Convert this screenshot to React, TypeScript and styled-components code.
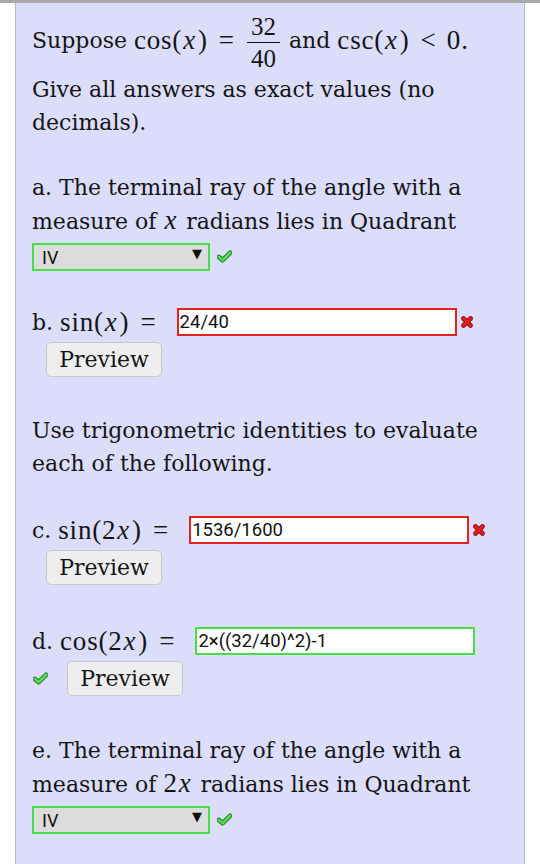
import React from "react";
import styled, { createGlobalStyle } from "styled-components";

const GlobalStyle = createGlobalStyle`
  html, body {
    margin: 0;
    padding: 0;
    background: #ffffff;
  }
  body {
    font-family: "DejaVu Serif", "Liberation Serif", serif;
    color: #151515;
  }
`;

type Mark = "correct" | "incorrect";

const CheckIcon = () => (
  <svg width="15" height="13" viewBox="0 0 16 14">
    <path
      d="M2 7.5 L6 11 L14 3"
      fill="none"
      stroke="#2a6e2a"
      strokeWidth="5"
      strokeLinecap="round"
      strokeLinejoin="round"
    />
    <path
      d="M2 7.5 L6 11 L14 3"
      fill="none"
      stroke="#4fe04f"
      strokeWidth="3"
      strokeLinecap="round"
      strokeLinejoin="round"
    />
  </svg>
);

const CrossIcon = () => (
  <svg width="12" height="12" viewBox="0 0 12 12">
    <path
      d="M2.5 2.5 L9.5 9.5 M9.5 2.5 L2.5 9.5"
      fill="none"
      stroke="#8a1010"
      strokeWidth="4.6"
      strokeLinecap="round"
    />
    <path
      d="M2.5 2.5 L9.5 9.5 M9.5 2.5 L2.5 9.5"
      fill="none"
      stroke="#e41c1c"
      strokeWidth="3"
      strokeLinecap="round"
    />
  </svg>
);

const MarkIcon = ({ mark }: { mark: Mark }) => (
  <MarkSlot>{mark === "correct" ? <CheckIcon /> : <CrossIcon />}</MarkSlot>
);

const QuadrantSelect = () => (
  <SelectRow>
    <SelectWrap>
      <Select defaultValue="IV">
        <option value="I">I</option>
        <option value="II">II</option>
        <option value="III">III</option>
        <option value="IV">IV</option>
      </Select>
      <Arrow>▼</Arrow>
    </SelectWrap>
    <MarkIcon mark="correct" />
  </SelectRow>
);

const Page = () => (
  <>
    <GlobalStyle />
    <Screen>
      <Panel>
        <FirstLine>
          Suppose&nbsp;
          <MathSpan>
            cos(<Var>x</Var>)
          </MathSpan>
          <MathOp>=</MathOp>
          <Fraction>
            <Numerator>32</Numerator>
            <Denominator>40</Denominator>
          </Fraction>
          &nbsp;and&nbsp;
          <MathSpan>
            csc(<Var>x</Var>)
          </MathSpan>
          <MathOp>&lt;</MathOp>
          <MathSpan>0.</MathSpan>
        </FirstLine>
        <Paragraph>Give all answers as exact values (no decimals).</Paragraph>

        <Paragraph $top={32}>
          a. The terminal ray of the angle with a measure of{" "}
          <MathSpan>
            <Var>x</Var>
          </MathSpan>{" "}
          radians lies in Quadrant
        </Paragraph>
        <QuadrantSelect />

        <AnswerRow $top={38}>
          <Label>
            b.&nbsp;
            <MathSpan>
              sin(<Var>x</Var>)
            </MathSpan>
            <MathOp>=</MathOp>
          </Label>
          <AnswerInput readOnly value="24/40" $mark="incorrect" />
          <MarkIcon mark="incorrect" />
        </AnswerRow>
        <PreviewRow>
          <PreviewButton>Preview</PreviewButton>
        </PreviewRow>

        <Paragraph $top={37}>
          Use trigonometric identities to evaluate each of the following.
        </Paragraph>

        <AnswerRow $top={36}>
          <Label>
            c.&nbsp;
            <MathSpan>
              sin(2<Var>x</Var>)
            </MathSpan>
            <MathOp>=</MathOp>
          </Label>
          <AnswerInput readOnly value="1536/1600" $mark="incorrect" />
          <MarkIcon mark="incorrect" />
        </AnswerRow>
        <PreviewRow>
          <PreviewButton>Preview</PreviewButton>
        </PreviewRow>

        <AnswerRow $top={42}>
          <Label>
            d.&nbsp;
            <MathSpan>
              cos(2<Var>x</Var>)
            </MathSpan>
            <MathOp>=</MathOp>
          </Label>
          <AnswerInput readOnly value="2×((32/40)^2)-1" $mark="correct" />
        </AnswerRow>
        <PreviewRow>
          <MarkIcon mark="correct" />
          <PreviewButton $shift>Preview</PreviewButton>
        </PreviewRow>

        <Paragraph $top={38}>
          e. The terminal ray of the angle with a measure of{" "}
          <MathSpan>
            2<Var>x</Var>
          </MathSpan>{" "}
          radians lies in Quadrant
        </Paragraph>
        <QuadrantSelect />
      </Panel>
    </Screen>
  </>
);

export default function App() {
  return <Page />;
}

const Screen = styled.div`
  width: 540px;
  min-height: 864px;
  box-sizing: border-box;
  border-top: 3px solid #a9a9a9;
  padding-left: 15px;
  display: flex;
`;

const Panel = styled.div`
  width: 510px;
  min-height: 861px;
  box-sizing: border-box;
  background: #dcdcfb;
  border-left: 1px solid #b6b6d2;
  border-right: 1px solid #b6b6d2;
  padding: 4px 16px 40px 16px;
  font-size: 22px;
  line-height: 33px;
`;

const FirstLine = styled.div`
  display: flex;
  align-items: center;
  height: 66px;
  white-space: nowrap;
`;

const Paragraph = styled.p<{ $top?: number }>`
  margin: ${(p) => p.$top ?? 0}px 0 0 0;
`;

const MathSpan = styled.span`
  font-family: "Liberation Serif", "DejaVu Serif", serif;
  font-size: 27px;
  letter-spacing: 0.8px;
`;

const Var = styled.i`
  font-style: italic;
  margin: 0 2px 0 1px;
`;

const MathOp = styled.span`
  font-family: "Liberation Serif", serif;
  font-size: 27px;
  padding: 0 11px;
`;

const Fraction = styled.span`
  display: inline-flex;
  flex-direction: column;
  align-items: center;
  font-family: "Liberation Serif", serif;
  font-size: 25px;
  line-height: 25px;
  padding: 0 2px;
  margin-top: 4px;
`;

const Numerator = styled.span`
  padding: 0 4px 3px;
  border-bottom: 1.5px solid #151515;
`;

const Denominator = styled.span`
  padding: 3px 4px 0;
`;

const SelectRow = styled.div`
  display: flex;
  align-items: center;
  gap: 6px;
  margin-top: 4px;
  height: 28px;
`;

const SelectWrap = styled.span`
  position: relative;
  display: inline-block;
`;

const Select = styled.select`
  appearance: none;
  -webkit-appearance: none;
  width: 178px;
  height: 28px;
  box-sizing: border-box;
  border: 2px solid #45e045;
  border-radius: 0;
  background: #dcdcdc;
  font-family: Roboto, "Liberation Sans", sans-serif;
  font-size: 18px;
  color: #111;
  padding: 0 0 0 8px;
  margin: 0;
  outline: none;
`;

const Arrow = styled.span`
  position: absolute;
  right: 8px;
  top: 7px;
  font-size: 13px;
  line-height: 14px;
  color: #111;
  pointer-events: none;
  font-family: "DejaVu Sans", sans-serif;
`;

const MarkSlot = styled.span`
  display: inline-flex;
  align-items: center;
  justify-content: center;
  width: 16px;
  height: 16px;
`;

const AnswerRow = styled.div<{ $top: number }>`
  display: flex;
  align-items: center;
  margin-top: ${(p) => p.$top}px;
  height: 28px;
  white-space: nowrap;
`;

const Label = styled.span`
  display: inline-flex;
  align-items: center;
  margin-right: 10px;
`;

const AnswerInput = styled.input<{ $mark: Mark }>`
  width: 280px;
  height: 28px;
  box-sizing: border-box;
  border: 2px solid ${(p) => (p.$mark === "correct" ? "#45e045" : "#e42222")};
  background: #ffffff;
  font-family: Roboto, "Liberation Sans", sans-serif;
  font-size: 18.5px;
  color: #111;
  padding: 0 1px;
  margin: 0 2px 0 0;
  outline: none;
`;

const PreviewRow = styled.div`
  display: flex;
  align-items: center;
  margin-top: 6px;
`;

const PreviewButton = styled.button<{ $shift?: boolean }>`
  height: 35px;
  width: 116px;
  box-sizing: border-box;
  margin-left: ${(p) => (p.$shift ? "19px" : "14px")};
  background: #eeeeee;
  border: 1px solid #c9c9c9;
  border-radius: 5px;
  font-family: "DejaVu Serif", "Liberation Serif", serif;
  font-size: 22px;
  color: #151515;
  padding: 0;
`;
